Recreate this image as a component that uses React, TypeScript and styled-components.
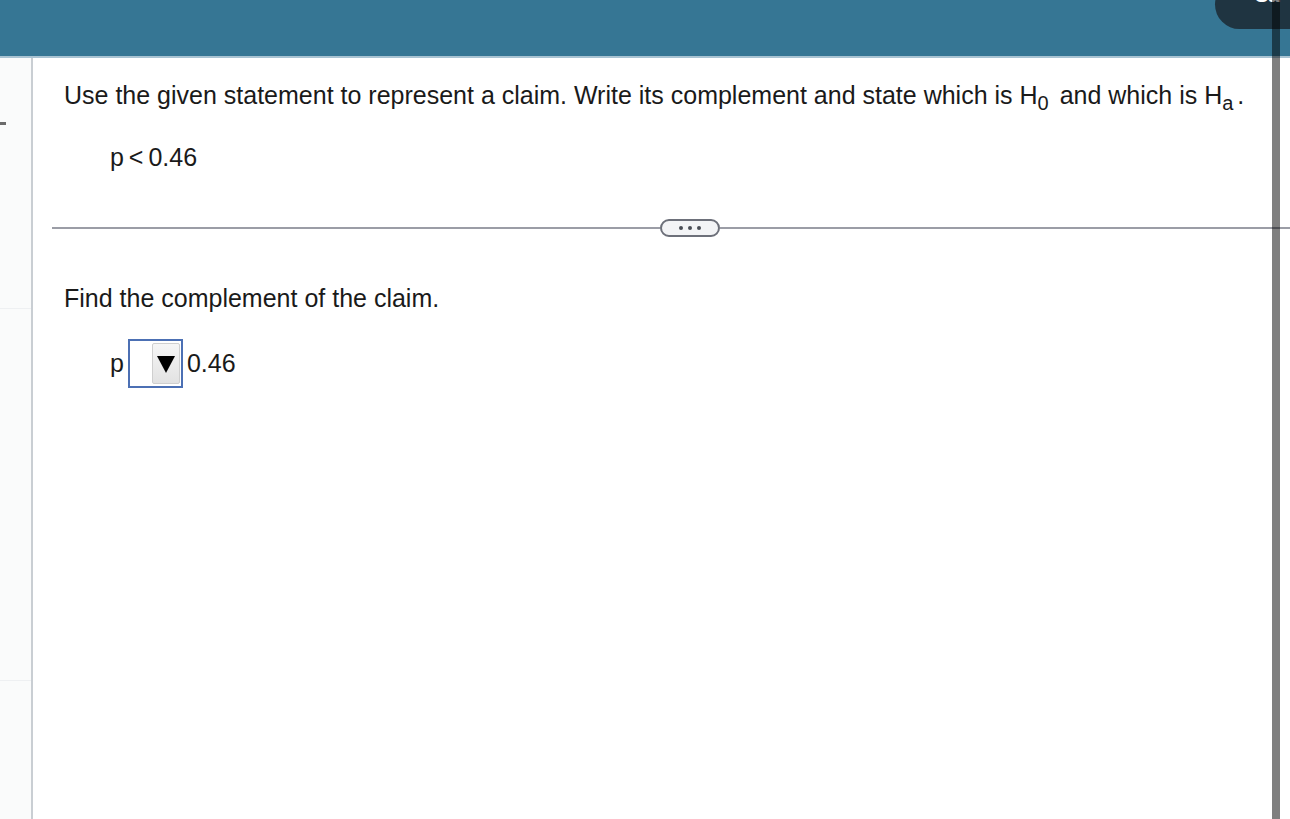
import React from "react";
import styled, { createGlobalStyle } from "styled-components";

const Global = createGlobalStyle`
  html, body { margin: 0; padding: 0; background: #fff; }
  body { font-family: "Liberation Sans", Arial, sans-serif; color: #1a1a1a; overflow: hidden; }
  #root { width: 1290px; height: 819px; }
`;

const Page = styled.div`
  position: relative;
  width: 1290px;
  height: 819px;
  display: flex;
  flex-direction: column;
  overflow: hidden;
  background: #fff;
`;

const Header = styled.header`
  height: 56px;
  flex: none;
  background: #367694;
  border-bottom: 2px solid #a9c3d2;
  position: relative;
`;

const UserPill = styled.div`
  position: absolute;
  top: -20px;
  left: 1215px;
  width: 120px;
  height: 49px;
  background: #1f3441;
  border-bottom-left-radius: 28px;
  border-top-left-radius: 28px;
  color: #fff;
  font-weight: bold;
  font-size: 20px;
  padding-left: 40px;
  box-sizing: border-box;
  line-height: 24px;
  padding-top: 3px;
`;

const Body = styled.div`
  flex: 1;
  display: flex;
`;

const Side = styled.aside`
  width: 31px;
  flex: none;
  background: #fafbfb;
  border-right: 2px solid #c9ced3;
  display: flex;
  flex-direction: column;
`;

const SideDash = styled.div`
  margin-top: 64px;
  width: 6px;
  height: 3px;
  background: #6b6b6b;
`;

const SideRule = styled.div<{ $top: number }>`
  margin-top: ${(p) => p.$top}px;
  height: 1px;
  background: #eef0f2;
`;

const Main = styled.main`
  flex: 1;
  display: flex;
  flex-direction: column;
  font-size: 25px;
`;

const Question = styled.section`
  padding: 23px 0 0 31px;
`;

const Prompt = styled.p`
  margin: 0;
  line-height: 28px;
  white-space: nowrap;
`;

const Sub = styled.sub`
  font-size: 20px;
  vertical-align: -6px;
  line-height: 0;
  margin-right: 4px;
`;

const Claim = styled.p`
  margin: 34px 0 0 46px;
  line-height: 28px;
  word-spacing: -2px;
`;

const DividerRow = styled.div`
  margin: 48px 0 0 19px;
  height: 18px;
  display: flex;
  align-items: center;
`;

const Line = styled.div<{ $w?: number }>`
  flex: ${(p) => (p.$w ? `0 0 ${p.$w}px` : "1")};
  height: 2px;
  background: #9b9da6;
`;

const DotsButton = styled.div`
  width: 56px;
  height: 14px;
  border: 2px solid #6d707a;
  border-radius: 9px;
  background: #f3f4f6;
  display: flex;
  align-items: center;
  justify-content: center;
  gap: 5px;
  flex: none;
`;

const Dot = styled.span`
  width: 4px;
  height: 4px;
  border-radius: 50%;
  background: #4a4d55;
`;

const Answer = styled.section`
  padding: 47px 0 0 31px;
`;

const Row = styled.div`
  margin: 27px 0 0 46px;
  display: flex;
  align-items: center;
  gap: 4px;
`;

const Select = styled.div`
  width: 50px;
  height: 45px;
  border: 2px solid #4c70b4;
  display: flex;
  align-items: center;
  justify-content: flex-end;
  padding-right: 1px;
  box-sizing: content-box;
`;

const Arrow = styled.div`
  width: 28px;
  height: 41px;
  border: 1px solid #cfcfcf;
  border-radius: 2px;
  background: linear-gradient(#f6f6f6, #e2e2e2);
  display: flex;
  align-items: center;
  justify-content: center;
  box-sizing: border-box;
`;

const Scrollbar = styled.div`
  position: absolute;
  top: 0;
  right: 10px;
  width: 8px;
  height: 819px;
  background: rgba(0, 0, 0, 0.5);
`;

export default function App() {
  return (
    <>
      <Global />
      <Page>
        <Header>
          <UserPill>Sa</UserPill>
        </Header>
        <Body>
          <Side>
            <SideDash />
            <SideRule $top={183} />
            <SideRule $top={371} />
          </Side>
          <Main>
            <Question>
              <Prompt>
                Use the given statement to represent a claim. Write its complement and state which is H
                <Sub>0</Sub> and which is H<Sub>a</Sub>.
              </Prompt>
              <Claim>p &lt; 0.46</Claim>
            </Question>
            <DividerRow>
              <Line $w={608} />
              <DotsButton>
                <Dot />
                <Dot />
                <Dot />
              </DotsButton>
              <Line />
            </DividerRow>
            <Answer>
              <Prompt>Find the complement of the claim.</Prompt>
              <Row>
                <span>p</span>
                <Select>
                  <Arrow>
                    <svg width="20" height="20" viewBox="0 0 20 20">
                      <polygon points="1,2 19,2 10,19" fill="#000" />
                    </svg>
                  </Arrow>
                </Select>
                <span>0.46</span>
              </Row>
            </Answer>
          </Main>
        </Body>
        <Scrollbar />
      </Page>
    </>
  );
}
